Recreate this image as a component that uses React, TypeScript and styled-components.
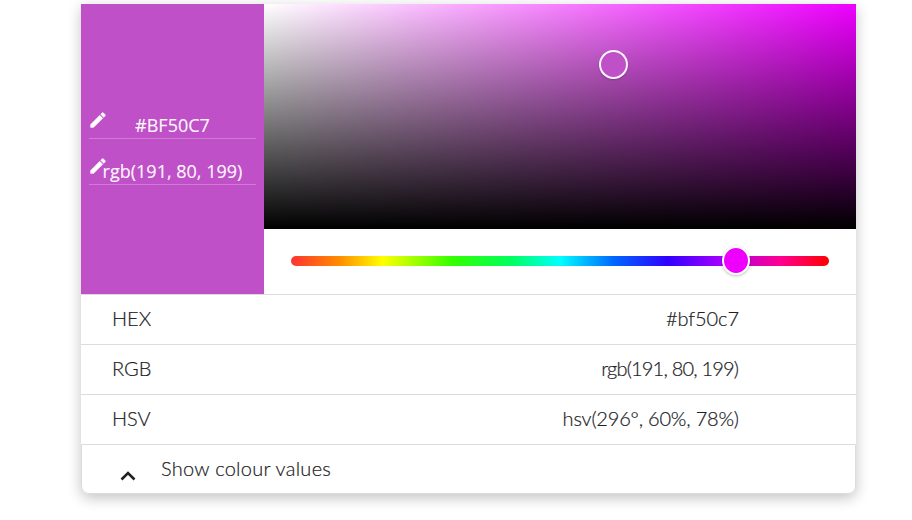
import { useRef, useState } from "react";
import type { PointerEvent } from "react";
import styled, { createGlobalStyle } from "styled-components";

const GlobalStyle = createGlobalStyle`
  * {
    box-sizing: border-box;
  }
  body {
    margin: 0;
    background-color: white;
    overflow: hidden;
  }
`;

const Wrapper = styled.div`
  height: 520px;
  padding: 4px 56px 0 81px;
`;
const Card = styled.div`
  height: 490px;
  border-radius: 0 0 8px 8px;
  box-shadow: 0 4px 14px rgba(0, 0, 0, 0.24);
  background-color: white;
`;
const Picker = styled.div`
  display: grid;
  grid-template-columns: 183px 1fr;
  height: 290px;
`;
const Preview = styled.div`
  display: flex;
  flex-direction: column;
  padding: 103px 8px 0;
  background-color: #bf50c7;
`;
const PreviewField = styled.div`
  position: relative;
  height: 32px;
  margin-bottom: 14px;
  border-bottom: 1px solid rgba(255, 255, 255, 0.25);
  color: rgba(255, 255, 255, 0.95);
  font-family: "Open Sans", "Noto Sans", sans-serif;
  font-size: 18px;
  line-height: 36px;
  text-align: center;
  white-space: nowrap;
  -webkit-text-stroke: 0.2px rgba(255, 255, 255, 0.95);
`;
const PencilIcon = styled.svg`
  position: absolute;
  top: 3px;
  left: -1px;
  width: 20px;
  height: 20px;
  fill: white;
  stroke: white;
  stroke-width: 0.4;
`;
const Controls = styled.div`
  display: flex;
  flex-direction: column;
`;
const Shade = styled.div<{ $hue: number }>`
  position: relative;
  height: 225px;
  background: linear-gradient(to top, black, transparent),
    linear-gradient(to right, white, rgba(255, 255, 255, 0)),
    ${(props) => `hsl(${props.$hue}, 100%, 50%)`};
`;
const ShadeHandle = styled.div`
  position: absolute;
  width: 29px;
  height: 29px;
  margin: -14px 0 0 -14px;
  border: 2px solid rgba(255, 255, 255, 0.95);
  border-radius: 50%;
  background-color: #bf50c7;
  box-shadow: 0 1px 2px rgba(0, 0, 0, 0.2);
`;
const HueArea = styled.div`
  flex: 1;
  padding: 27px 27px 0;
`;
const HueTrack = styled.div`
  position: relative;
  height: 10px;
  border-radius: 5px;
  background: linear-gradient(
    to right,
    #ff3333 0%,
    #ff8c00 9%,
    #ffff00 17%,
    #33ff00 30%,
    #00ff5e 41%,
    #00ffff 50%,
    #0066ff 60%,
    #3000ff 70%,
    #a600ff 80%,
    #d400bb 86%,
    #ff0090 91%,
    #ff0000 100%
  );
`;
const HueHandle = styled.div<{ $hue: number }>`
  position: absolute;
  top: -10px;
  width: 28px;
  height: 29px;
  margin-left: -14px;
  border: 2px solid white;
  border-radius: 50%;
  background-color: ${(props) => `hsl(${props.$hue}, 100%, 50%)`};
  box-shadow: 0 1px 3px rgba(0, 0, 0, 0.26);
`;
const Row = styled.div`
  display: flex;
  justify-content: space-between;
  height: 50px;
  padding: 0 117px 0 31px;
  border-top: 1px solid #dadce0;
  color: #202124;
  font-family: Lato, "Open Sans", sans-serif;
  font-size: 20px;
  font-weight: 300;
  line-height: 47px;
  -webkit-text-stroke: 0.2px #202124;
`;
const Label = styled.span<{ $spacing?: number }>`
  letter-spacing: ${(props) => props.$spacing ?? 0}px;
  margin-right: ${(props) => -(props.$spacing ?? 0)}px;
`;
const Toggle = styled(Row)`
  justify-content: flex-start;
  gap: 23px;
  padding: 0 36px;
  border: 1px solid #dadce0;
  border-radius: 0 0 8px 8px;
  cursor: pointer;
`;
const ChevronIcon = styled.svg<{ $open: boolean }>`
  width: 20px;
  height: 20px;
  margin-top: 21px;
  fill: none;
  stroke: #202124;
  stroke-width: 2.6;
  transform: ${(props) => (props.$open ? "none" : "rotate(180deg)")};
`;

const rows = [
  { name: "HEX", value: "#bf50c7", spacing: -0.1 },
  { name: "RGB", value: "rgb(191, 80, 199)", spacing: -0.8 },
  { name: "HSV", value: "hsv(296°, 60%, 78%)", spacing: -0.2 },
];

function Pencil() {
  return (
    <PencilIcon viewBox="0 0 24 24">
      <path d="M3 17.25V21h3.75L17.81 9.94l-3.75-3.75L3 17.25zM20.71 7.04a1 1 0 0 0 0-1.41l-2.34-2.34a1 1 0 0 0-1.41 0l-1.83 1.83 3.75 3.75 1.83-1.83z" />
    </PencilIcon>
  );
}

export default function App() {
  const [hue, setHue] = useState(296);
  const [huePosition, setHuePosition] = useState(445);
  const [shade, setShade] = useState({ x: 349, y: 60 });
  const [isOpen, setOpen] = useState(true);
  const track = useRef<HTMLDivElement>(null);

  const onHueDown = (e: PointerEvent<HTMLDivElement>) => {
    if (!track.current) return;
    const { left, width } = track.current.getBoundingClientRect();
    const x = Math.min(Math.max(e.clientX - left, 0), width);
    setHuePosition(x);
    setHue(Math.round((x / width) * 360));
  };
  const onShadeDown = (e: PointerEvent<HTMLDivElement>) => {
    const { left, top } = e.currentTarget.getBoundingClientRect();
    setShade({ x: e.clientX - left, y: e.clientY - top });
  };

  return (
    <Wrapper>
      <GlobalStyle />
      <Card>
        <Picker>
          <Preview>
            <PreviewField>
              <Pencil />
              #BF50C7
            </PreviewField>
            <PreviewField>
              <Pencil />
              rgb(191, 80, 199)
            </PreviewField>
          </Preview>
          <Controls>
            <Shade $hue={hue} onPointerDown={onShadeDown}>
              <ShadeHandle style={{ left: shade.x, top: shade.y }} />
            </Shade>
            <HueArea onPointerDown={onHueDown}>
              <HueTrack ref={track}>
                <HueHandle $hue={hue} style={{ left: huePosition }} />
              </HueTrack>
            </HueArea>
          </Controls>
        </Picker>
        {rows.map((row) => (
          <Row key={row.name}>
            <Label>{row.name}</Label>
            <Label $spacing={row.spacing}>{row.value}</Label>
          </Row>
        ))}
        <Toggle onClick={() => setOpen(!isOpen)}>
          <ChevronIcon $open={isOpen} viewBox="0 0 20 20">
            <path d="M3.5 13.5L10 7l6.5 6.5" />
          </ChevronIcon>
          <Label $spacing={0.27}>Show colour values</Label>
        </Toggle>
      </Card>
    </Wrapper>
  );
}
